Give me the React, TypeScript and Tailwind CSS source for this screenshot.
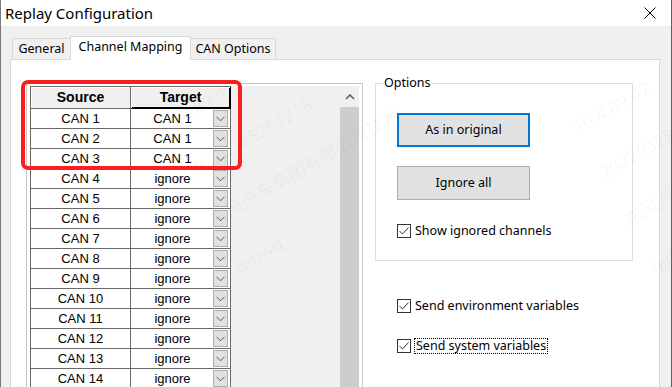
import type { ReactNode } from 'react';

const ROWS = Array.from({ length: 14 }, (_, i) => ({
  source: `CAN ${i + 1}`,
  target: i < 3 ? 'CAN 1' : 'ignore',
}));

// faint rotated watermark lines laid over the dialog
const WATERMARK: { text: string; className: string }[] = [
  { text: '10.4.89.42', className: 'left-[158px] top-[120px]' },
  { text: '20220325251218', className: 'left-[185px] top-[165px]' },
  { text: '东风汽车集团有限公司技术', className: 'left-[210px] top-[212px]' },
  { text: 'qinwq', className: 'left-[235px] top-[258px]' },
  { text: '10.4.89.42', className: 'left-[573px] top-[120px]' },
  { text: '20220325251218', className: 'left-[600px] top-[165px]' },
  { text: '东风汽车集团有限公司技术', className: 'left-[625px] top-[212px]' },
  { text: 'qinwq', className: 'left-[650px] top-[258px]' },
];

function DropButton() {
  return (
    <div className="flex h-[17px] w-[15px] items-center justify-center border border-[#adadad] bg-[#e1e1e1]">
      <svg width="9" height="6" viewBox="0 0 9 6">
        <polyline points="0.5,0.8 4.5,4.8 8.5,0.8" fill="none" stroke="#5a5a5a" strokeWidth="1" />
      </svg>
    </div>
  );
}

function CheckBox({ children, focused }: { children: ReactNode; focused?: boolean }) {
  return (
    <div className="flex items-center">
      <div className="flex h-[14px] w-[14px] items-center justify-center border border-[#333333] bg-white">
        <svg width="12" height="12" viewBox="0 0 12 12">
          <polyline points="1.5,6 4.5,9 10.5,2.5" fill="none" stroke="#333333" strokeWidth="1" />
        </svg>
      </div>
      <span
        className={
          focused
            ? 'ml-[3px] border border-dotted border-black px-[1px] leading-[14px]'
            : 'ml-[4px] leading-[14px]'
        }
      >
        {children}
      </span>
    </div>
  );
}

function ChannelGrid() {
  return (
    <div className="w-[201px] self-start border-l border-t border-[#696969] bg-white font-['Liberation_Sans',Arial,sans-serif] text-[13px] text-black">
      <div className="flex h-[22px] text-[14px] font-bold">
        <div className="flex w-[100px] items-center justify-center border-b border-r border-[#696969] bg-[#f0f0f0] shadow-[inset_1px_1px_0_#ffffff]">
          Source
        </div>
        <div className="flex w-[100px] items-center justify-center border-b border-r border-black bg-[#f0f0f0] shadow-[inset_1px_1px_0_#ffffff,inset_-1px_-1px_0_#000000]">
          Target
        </div>
      </div>
      {ROWS.map((row) => (
        <div key={row.source} className="flex h-[20px]">
          <div className="flex w-[100px] items-center justify-center border-b border-r border-[#696969]">
            {row.source}
          </div>
          <div className="flex w-[100px] items-center border-b border-r border-[#696969] pr-[2px]">
            <span className="flex-1 pl-[1px] text-center">{row.target}</span>
            <DropButton />
          </div>
        </div>
      ))}
    </div>
  );
}

function ListBox() {
  return (
    <div className="flex w-[337px] flex-col border border-[#c8c8c8] bg-white px-[3px] pt-[2px]">
      <div className="flex flex-1 bg-[#f0f0f0]">
        <ChannelGrid />
        <div className="flex-1" />
        <div className="flex w-[19px] flex-col">
          <div className="flex h-[21px] items-center justify-center">
            <svg width="10" height="6" viewBox="0 0 10 6">
              <polyline points="1,5 5,1 9,5" fill="none" stroke="#606060" strokeWidth="1.6" />
            </svg>
          </div>
          <div className="flex-1 bg-[#cdcdcd]" />
        </div>
      </div>
    </div>
  );
}

function RightSide() {
  return (
    <div className="ml-[12px] flex flex-col text-[12.5px] text-black">
      <div className="relative flex h-[178px] w-[258px] flex-col border border-[#dcdcdc] pl-[21px] pt-[29px]">
        <span className="absolute -top-[10px] left-[7px] bg-white px-[1px] leading-[18px]">Options</span>
        <button className="flex h-[34px] w-[133px] items-center justify-center border-2 border-[#0078d7] bg-[#e1e1e1]">
          As in original
        </button>
        <button className="mt-[19px] flex h-[34px] w-[133px] items-center justify-center border border-[#adadad] bg-[#e1e1e1]">
          Ignore all
        </button>
        <div className="mt-[24px]">
          <CheckBox>Show ignored channels</CheckBox>
        </div>
      </div>
      <div className="mt-[38px] flex flex-col gap-[25px] pl-[22px]">
        <CheckBox>Send environment variables</CheckBox>
        <CheckBox focused>Send system variables</CheckBox>
      </div>
    </div>
  );
}

export default function App() {
  return (
    <div className="relative flex h-[387px] w-[672px] flex-col overflow-hidden border-l border-r border-l-[#7a7a7a] border-r-[#5f5f5f] bg-[#f0f0f0] font-['Noto_Sans',sans-serif] text-black">
      <div className="flex h-[26px] shrink-0 items-center justify-between bg-white pl-[4px] pr-[15px]">
        <span className="text-[15px] leading-none">Replay Configuration</span>
        <svg width="12" height="12" viewBox="0 0 12 12">
          <path d="M0.5 0.5 L11.5 11.5 M11.5 0.5 L0.5 11.5" stroke="#000" strokeWidth="1" />
        </svg>
      </div>

      <div className="flex flex-1 flex-col pl-[9px] pr-[11px] pt-[10px]">
        <div className="ml-[2px] flex h-[23px] items-end text-[12.5px]">
          <div className="flex h-[21px] w-[59px] items-center justify-center border border-b-0 border-[#d9d9d9] bg-[#f0f0f0]">
            General
          </div>
          <div className="relative z-10 -mb-px -ml-px flex h-[24px] w-[121px] items-center justify-center border border-b-0 border-[#d9d9d9] bg-white pb-[2px]">
            Channel Mapping
          </div>
          <div className="-ml-px flex h-[21px] w-[86px] items-center justify-center border border-b-0 border-[#d9d9d9] bg-[#f0f0f0]">
            CAN Options
          </div>
        </div>

        <div className="flex flex-1 border border-[#d9d9d9] bg-white pl-[15px] pt-[23px]">
          <ListBox />
          <RightSide />
        </div>
      </div>

      {/* annotation box drawn over the first three rows */}
      <div className="absolute left-[20px] top-[80px] h-[90px] w-[221px] rounded-[7px] border-[4px] border-[#fa1e1e]" />

      {WATERMARK.map((w, i) => (
        <div
          key={i}
          className={`pointer-events-none absolute origin-left rotate-[-30deg] whitespace-nowrap font-['Noto_Sans','Noto_Sans_CJK_SC',sans-serif] text-[18px] leading-none text-black/[0.045] ${w.className}`}
        >
          {w.text}
        </div>
      ))}
    </div>
  );
}
